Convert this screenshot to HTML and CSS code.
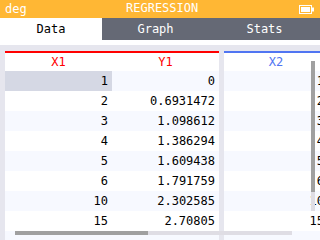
FILE: index.html
```html
<!DOCTYPE html>
<html lang="en">
  <head>
    <meta charset="UTF-8" />
    <title>Regression</title>
    <link rel="stylesheet" href="styles.css">
  </head>
  <body>
    <div class="screen">
      <div class="status">
        <span class="unit">deg</span>
        <span class="title">REGRESSION</span>
        <svg class="battery" width="16" height="9" viewBox="0 0 16 9">
          <rect x="0.5" y="0.5" width="12" height="8" fill="none" stroke="#fff" />
          <rect x="2" y="2" width="9" height="5" fill="#fff" />
          <rect x="13" y="2.5" width="2" height="4" fill="#fff" />
        </svg>
      </div>

      <div class="tabs">
        <div class="tab tab-data active">Data</div>
        <div class="tab tab-graph">Graph</div>
        <div class="tab tab-stats">Stats</div>
      </div>
      <div class="gap"></div>

      <div class="content">
        <div class="sheet">
          <div class="group">
            <div class="head red">X1</div>
            <div class="head red">Y1</div>
            <div class="cell odd selected">1</div><div class="cell odd">0</div>
            <div class="cell">2</div><div class="cell">0.6931472</div>
            <div class="cell odd">3</div><div class="cell odd">1.098612</div>
            <div class="cell">4</div><div class="cell">1.386294</div>
            <div class="cell odd">5</div><div class="cell odd">1.609438</div>
            <div class="cell">6</div><div class="cell">1.791759</div>
            <div class="cell odd">10</div><div class="cell odd">2.302585</div>
            <div class="cell">15</div><div class="cell">2.70805</div>
            <div class="cell odd"></div><div class="cell odd"></div>
          </div>
          <div class="group narrow">
            <div class="head blue">X2</div>
            <div class="cell odd">1</div>
            <div class="cell">2</div>
            <div class="cell odd">3</div>
            <div class="cell">4</div>
            <div class="cell odd">5</div>
            <div class="cell">6</div>
            <div class="cell odd">10</div>
            <div class="cell">15</div>
            <div class="cell odd"></div>
          </div>
        </div>

        <div class="hscroll"><div class="hthumb"></div></div>
        <div class="vscroll"><div class="vthumb"></div></div>
      </div>
    </div>
  </body>
</html>
```

FILE: styles.css
```css
body {
  margin: 0;
  font-family: "DejaVu Sans Mono", "Liberation Mono", monospace;
  font-size: 12px;
}
.screen {
  width: 320px;
  height: 240px;
  overflow: hidden;
  background: #e6e6ee;
}
.status {
  height: 18px;
  background: #ffb734;
  color: white;
  display: flex;
  align-items: center;
  padding: 0 5px;
  position: relative;
}
.unit {
  flex: 1;
}
.title {
  position: absolute;
  left: 126px;
  top: 1px;
}
.tabs {
  height: 22px;
  display: flex;
  background: #656975;
  color: white;
}
.tab {
  display: flex;
  align-items: center;
  justify-content: center;
}
.tab-data {
  width: 102px;
}
.tab-graph {
  width: 107px;
}
.tab-stats {
  width: 111px;
}
.tab.active {
  background: white;
  color: #000;
}
.gap {
  height: 5px;
  background: white;
}
.content {
  height: 195px;
  position: relative;
  overflow: hidden;
  padding: 6px 0 0 5px;
}
.sheet {
  display: flex;
  gap: 5px;
}
.group {
  display: grid;
  grid-template-columns: 107px 107px;
  flex: none;
}
.group.narrow {
  grid-template-columns: 104px;
}
.head {
  height: 18px;
  background: white;
  display: flex;
  align-items: center;
  justify-content: center;
}
.head.red {
  border-top: 2px solid #ff0000;
  color: #ff0000;
}
.head.blue {
  border-top: 2px solid #5075f2;
  color: #5075f2;
}
.cell {
  height: 20px;
  background: white;
  color: #000;
  display: flex;
  align-items: center;
  justify-content: flex-end;
  padding-right: 4px;
}
.cell.odd {
  background: #f7f9ff;
}
.cell.selected {
  background: #d5d8e4;
}
.hscroll {
  position: absolute;
  left: 15px;
  top: 186px;
  width: 277px;
  height: 4px;
  background: #dfdde4;
}
.hthumb {
  width: 133px;
  height: 4px;
  background: #a0a0a0;
}
.vscroll {
  position: absolute;
  left: 311px;
  top: 16px;
  width: 4px;
  height: 150px;
  background: #dfdde4;
}
.vthumb {
  width: 4px;
  height: 131px;
  background: #a0a0a0;
}
```
